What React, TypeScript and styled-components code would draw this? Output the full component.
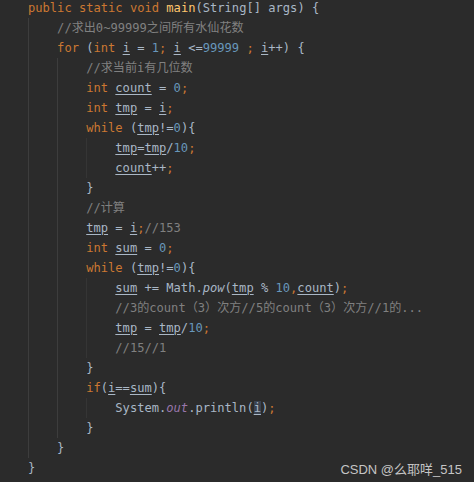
import React from "react";
import styled, { createGlobalStyle } from "styled-components";

const Global = createGlobalStyle`
  html, body { margin: 0; padding: 0; background: #2b2b2b; }
  body { width: 474px; height: 482px; overflow: hidden; }
`;

const Editor = styled.div`
  position: relative;
  width: 474px;
  height: 482px;
  background: #2b2b2b;
  overflow: hidden;
  box-sizing: border-box;
  padding-left: 28px;
`;

const Code = styled.div`
  margin-top: -2px;
  font-family: "DejaVu Sans Mono", "Noto Sans CJK SC", monospace;
  font-size: 12.1px;
  color: #a9b7c6;
  display: flex;
  flex-direction: column;
`;

const Line = styled.div`
  display: flex;
  height: 20px;
  line-height: 20px;
  white-space: pre;
`;

const Guide = styled.span<{ $show: boolean; $faint?: boolean }>`
  display: inline-block;
  width: 4ch;
  height: 20px;
  box-sizing: border-box;
  border-left: 1px solid
    ${(p) => (p.$show ? (p.$faint ? "#353535" : "#3d3d3d") : "transparent")};
`;

const Kw = styled.span`
  color: #cc7832;
`;
const Num = styled.span`
  color: #6897bb;
`;
const Cmt = styled.span`
  color: #808080;
`;
const Fn = styled.span`
  color: #ffc66d;
`;
const Var = styled.span<{ $hl?: boolean }>`
  text-decoration: underline;
  text-underline-offset: 2px;
  text-decoration-thickness: 1px;
  background: ${(p) => (p.$hl ? "#3a4350" : "transparent")};
`;
const Ital = styled.span`
  font-style: italic;
`;
const Field = styled.span`
  color: #9876aa;
  font-style: italic;
`;

const Watermark = styled.div`
  position: absolute;
  right: 12px;
  bottom: 4px;
  font-family: "Liberation Sans", "Noto Sans CJK SC", sans-serif;
  font-size: 13px;
  color: #d6d6d6;
  opacity: 0.9;
  white-space: nowrap;
`;

const Row: React.FC<{ depth: number; faint?: number[]; children?: React.ReactNode }> = ({
  depth,
  faint = [],
  children,
}) => (
  <Line>
    {Array.from({ length: depth }).map((_, i) => (
      <Guide key={i} $show={true} $faint={faint.includes(i)} />
    ))}
    <span>{children}</span>
  </Line>
);

const S = () => <Kw>;</Kw>;

export default function App() {
  return (
    <>
      <Global />
      <Editor>
        <Code>
          <Row depth={0}>
            <Kw>public static void </Kw>
            <Fn>main</Fn>(String[] args) {"{"}
          </Row>
          <Row depth={1}>
            <Cmt>//求出0~99999之间所有水仙花数</Cmt>
          </Row>
          <Row depth={1}>
            <Kw>for</Kw> (<Kw>int</Kw> <Var>i</Var> = <Num>1</Num>
            <S /> <Var>i</Var> {"<="}
            <Num>99999</Num> <S /> <Var>i</Var>++) {"{"}
          </Row>
          <Row depth={2}>
            <Cmt>//求当前i有几位数</Cmt>
          </Row>
          <Row depth={2}>
            <Kw>int</Kw> <Var>count</Var> = <Num>0</Num>
            <S />
          </Row>
          <Row depth={2}>
            <Kw>int</Kw> <Var>tmp</Var> = <Var>i</Var>
            <S />
          </Row>
          <Row depth={2}>
            <Kw>while</Kw> (<Var>tmp</Var>!=<Num>0</Num>){"{"}
          </Row>
          <Row depth={3} faint={[2]}>
            <Var>tmp</Var>=<Var>tmp</Var>/<Num>10</Num>
            <S />
          </Row>
          <Row depth={3} faint={[2]}>
            <Var>count</Var>++
            <S />
          </Row>
          <Row depth={2}>{"}"}</Row>
          <Row depth={2}>
            <Cmt>//计算</Cmt>
          </Row>
          <Row depth={2}>
            <Var>tmp</Var> = <Var>i</Var>
            <S />
            <Cmt>//153</Cmt>
          </Row>
          <Row depth={2}>
            <Kw>int</Kw> <Var>sum</Var> = <Num>0</Num>
            <S />
          </Row>
          <Row depth={2}>
            <Kw>while</Kw> (<Var>tmp</Var>!=<Num>0</Num>){"{"}
          </Row>
          <Row depth={3} faint={[2]}>
            <Var>sum</Var> += Math.<Ital>pow</Ital>(<Var>tmp</Var> % <Num>10</Num>
            <Kw>,</Kw>
            <Var>count</Var>)
            <S />
          </Row>
          <Row depth={3} faint={[2]}>
            <Cmt>//3的count（3）次方//5的count（3）次方//1的...</Cmt>
          </Row>
          <Row depth={3} faint={[2]}>
            <Var>tmp</Var> = <Var>tmp</Var>/<Num>10</Num>
            <S />
          </Row>
          <Row depth={3} faint={[2]}>
            <Cmt>//15//1</Cmt>
          </Row>
          <Row depth={2}>{"}"}</Row>
          <Row depth={2}>
            <Kw>if</Kw>(<Var>i</Var>==<Var>sum</Var>){"{"}
          </Row>
          <Row depth={3} faint={[2]}>
            System.<Field>out</Field>.println(<Var $hl>i</Var>)
            <S />
          </Row>
          <Row depth={2}>{"}"}</Row>
          <Row depth={1}>{"}"}</Row>
          <Row depth={0}>{"}"}</Row>
        </Code>
        <Watermark>CSDN @么耶咩_515</Watermark>
      </Editor>
    </>
  );
}
